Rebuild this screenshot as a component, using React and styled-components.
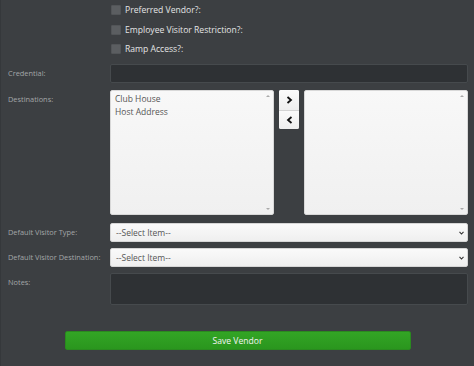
import React from "react";
import styled, { createGlobalStyle } from "styled-components";

const Global = createGlobalStyle`
  html, body { margin: 0; padding: 0; background: #36393c; }
  body { font-family: "Open Sans", "Noto Sans", sans-serif; }
  * { box-sizing: border-box; }
`;

const Panel = styled.div`
  width: 474px;
  height: 366px;
  background: #3c3f42;
  border-left: 1px solid #35383b;
  overflow: hidden;
  padding-right: 6px;
`;

const CheckRow = styled.div`
  display: flex;
  align-items: center;
  height: 19.7px;
  padding-left: 110px;
  gap: 4px;
`;

const Box = styled.span`
  width: 10px;
  height: 10px;
  background: #5b5e61;
  border: 1px solid #525558;
  border-radius: 1px;
`;

const CheckText = styled.span`
  color: #e4e5e6;
  font-size: 8.6px;
`;

const Row = styled.div`
  display: grid;
  grid-template-columns: 109px 1fr;
  margin-top: ${(p) => p.$mt || 0}px;
`;

const Label = styled.div`
  color: #a3a6a8;
  font-size: 7.4px;
  padding-left: 7px;
  padding-top: ${(p) => p.$pt || 5}px;
  line-height: 9px;
`;

const DarkInput = styled.div`
  height: ${(p) => p.$h}px;
  background: #2e3134;
  border: 1px solid #464a4d;
  border-radius: 2px;
`;

const ListArea = styled.div`
  display: flex;
  gap: 5px;
  align-items: flex-start;
`;

const ListBox = styled.div`
  position: relative;
  width: 164px;
  height: 125px;
  background: linear-gradient(#f8f8f8, #f0f0f0);
  border: 1px solid #d8d8d8;
  border-radius: 2px;
  padding: 2px 4px;
  color: #555;
  font-size: 8.5px;
  line-height: 12.6px;
`;

const ScrollArrow = styled.span`
  position: absolute;
  right: 3px;
  ${(p) => (p.$down ? "bottom: 4px;" : "top: 4px;")}
  width: 0;
  height: 0;
  border-left: 2px solid transparent;
  border-right: 2px solid transparent;
  ${(p) => (p.$down ? "border-top: 2px solid #aaa;" : "border-bottom: 2px solid #aaa;")}
`;

const MoveButtons = styled.div`
  display: flex;
  flex-direction: column;
  width: 20px;
  border-radius: 2px;
  overflow: hidden;
  background: #f6f6f6;
`;

const MoveBtn = styled.div`
  height: 19.5px;
  display: flex;
  align-items: center;
  justify-content: center;
  border-top: ${(p) => (p.$second ? "1px solid #d4d4d4" : "none")};
  background: linear-gradient(#fbfbfb, #eeeeee);
`;

const Select = styled.div`
  position: relative;
  height: 19px;
  background: linear-gradient(#fafafa, #efefef);
  border: 1px solid #d6d6d6;
  border-radius: 2px;
  color: #555;
  font-size: 8.5px;
  line-height: 17px;
  padding-left: 5px;
`;

const Chevron = styled.svg`
  position: absolute;
  right: 3px;
  top: 7px;
`;

const Footer = styled.div`
  display: flex;
  justify-content: center;
  margin-top: 26px;
  padding-left: 6px;
`;

const SaveButton = styled.div`
  width: 346px;
  height: 19px;
  background: linear-gradient(#33a525, #2a961e);
  border: 1px solid #2a8a1f;
  border-radius: 2px;
  color: #f4f4f4;
  font-size: 8.6px;
  display: flex;
  align-items: center;
  justify-content: center;
`;

const Arrow = ({ dir }) => (
  <svg width="7" height="8" viewBox="0 0 7 8">
    <path
      d={dir === "right" ? "M1.5 1 L5 4 L1.5 7" : "M5.5 1 L2 4 L5.5 7"}
      fill="none"
      stroke="#111"
      strokeWidth="1.8"
    />
  </svg>
);

const SelectField = ({ label, mt }) => (
  <Row $mt={mt}>
    <Label $pt={5}>{label}</Label>
    <Select>
      --Select Item--
      <Chevron width="5" height="4" viewBox="0 0 5 4">
        <path d="M0.5 0.8 L2.5 3 L4.5 0.8" fill="none" stroke="#333" strokeWidth="1.1" />
      </Chevron>
    </Select>
  </Row>
);

export default function App() {
  return (
    <>
      <Global />
      <Panel>
        <CheckRow><Box /><CheckText>Preferred Vendor?:</CheckText></CheckRow>
        <CheckRow><Box /><CheckText>Employee Visitor Restriction?:</CheckText></CheckRow>
        <CheckRow><Box /><CheckText>Ramp Access?:</CheckText></CheckRow>
        <Row $mt={5}>
          <Label>Credential:</Label>
          <DarkInput $h={19} />
        </Row>
        <Row $mt={7}>
          <Label>Destinations:</Label>
          <ListArea>
            <ListBox>
              Club House
              <br />
              Host Address
              <ScrollArrow />
              <ScrollArrow $down />
            </ListBox>
            <MoveButtons>
              <MoveBtn><Arrow dir="right" /></MoveBtn>
              <MoveBtn $second><Arrow dir="left" /></MoveBtn>
            </MoveButtons>
            <ListBox>
              <ScrollArrow />
              <ScrollArrow $down />
            </ListBox>
          </ListArea>
        </Row>
        <SelectField label="Default Visitor Type:" mt={8} />
        <SelectField label="Default Visitor Destination:" mt={6} />
        <Row $mt={6}>
          <Label>Notes:</Label>
          <DarkInput $h={32} />
        </Row>
        <Footer>
          <SaveButton>Save Vendor</SaveButton>
        </Footer>
      </Panel>
    </>
  );
}
